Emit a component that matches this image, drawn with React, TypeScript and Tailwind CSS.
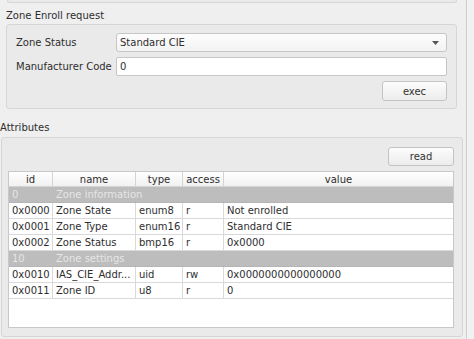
const rows: { kind: "section" | "row"; cells: string[] }[] = [
  { kind: "section", cells: ["0", "Zone information"] },
  { kind: "row", cells: ["0x0000", "Zone State", "enum8", "r", "Not enrolled"] },
  { kind: "row", cells: ["0x0001", "Zone Type", "enum16", "r", "Standard CIE"] },
  { kind: "row", cells: ["0x0002", "Zone Status", "bmp16", "r", "0x0000"] },
  { kind: "section", cells: ["10", "Zone settings"] },
  { kind: "row", cells: ["0x0010", "IAS_CIE_Addr...", "uid", "rw", "0x0000000000000000"] },
  { kind: "row", cells: ["0x0011", "Zone ID", "u8", "r", "0"] },
];

const cols = ["w-[44px]", "w-[83px]", "w-[47px]", "w-[41px]", "flex-1"];
const heads = ["id", "name", "type", "access", "value"];

function Button({ label, className }: { label: string; className: string }) {
  return (
    <div
      className={`h-[19px] flex items-center justify-center rounded-[3px] border border-[#c4c4c4] bg-gradient-to-b from-[#fcfcfc] to-[#ececec] text-[#333] ${className}`}
    >
      {label}
    </div>
  );
}

export default function App() {
  return (
    <div className="w-[474px] h-[339px] overflow-hidden flex bg-[#f2f2f2] font-['DejaVu_Sans',sans-serif] text-[10px] text-[#2e2e2e]">
      <div className="w-[467px] shrink-0 bg-[#efefef] border-r border-[#cfcfcf] flex flex-col">
        {/* previous group stub */}
        <div className="ml-[7px] w-[450px] h-[3px] border-x border-b border-[#d6d6d6] rounded-b-[3px] bg-[#eaeaea]" />

        <div className="h-[21px] pl-[6px] flex items-center pt-[3px]">Zone Enroll request</div>

        {/* Zone Enroll request */}
        <div className="ml-[6px] w-[451px] h-[85px] border border-[#d6d6d6] rounded-[3px] bg-[#eaeaea] pt-[8px] pl-[9px] pr-[9px] flex flex-col gap-[5px]">
          <div className="flex items-center h-[19px]">
            <div className="w-[100px]">Zone Status</div>
            <div className="flex-1 h-[19px] border border-[#c6c6c6] rounded-[3px] bg-gradient-to-b from-[#fdfdfd] to-[#f3f3f3] flex items-center pl-[3px] pr-[7px]">
              <span className="flex-1">Standard CIE</span>
              <svg width="7" height="4" viewBox="0 0 7 4">
                <path d="M0 0 L7 0 L3.5 4 Z" fill="#555" />
              </svg>
            </div>
          </div>
          <div className="flex items-center h-[19px]">
            <div className="w-[100px]">Manufacturer Code</div>
            <div className="flex-1 h-[19px] border border-[#c6c6c6] rounded-[2px] bg-white flex items-center pl-[3px]">0</div>
          </div>
          <div className="flex justify-end">
            <Button label="exec" className="w-[65px] h-[20px]" />
          </div>
        </div>

        <div className="h-[28px] flex items-end pb-[2px]">Attributes</div>

        {/* Attributes */}
        <div className="ml-[1px] w-[462px] h-[200px] border border-[#d6d6d6] rounded-[3px] bg-[#eaeaea] pt-[9px] pl-[6px] pr-[8px] flex flex-col">
          <div className="flex justify-end">
            <Button label="read" className="w-[66px] h-[19px]" />
          </div>
          <div className="mt-[5px] h-[157px] border border-[#c8c8c8] bg-white flex flex-col">
            <div className="flex h-[15px] bg-gradient-to-b from-[#ffffff] to-[#f1f1f1] border-b border-[#d4d4d4]">
              {heads.map((h, i) => (
                <div
                  key={h}
                  className={`${cols[i]} flex items-center justify-center ${i < 4 ? "border-r border-[#d4d4d4]" : ""}`}
                >
                  {h}
                </div>
              ))}
            </div>
            {rows.map((r, ri) =>
              r.kind === "section" ? (
                <div key={ri} className="flex h-[16px] bg-[#bdbdbd] text-[#e6e6e6] border-b border-[#b5b5b5]">
                  <div className="w-[44px] pl-[3px] flex items-center">{r.cells[0]}</div>
                  <div className="flex-1 pl-[3px] flex items-center">{r.cells[1]}</div>
                </div>
              ) : (
                <div key={ri} className="flex h-[16px] border-b border-[#d9d9d9]">
                  {r.cells.map((c, i) => (
                    <div
                      key={i}
                      className={`${cols[i]} pl-[3px] flex items-center whitespace-nowrap overflow-hidden ${i < 4 ? "border-r border-[#d9d9d9]" : ""}`}
                    >
                      {c}
                    </div>
                  ))}
                </div>
              )
            )}
          </div>
        </div>
      </div>
    </div>
  );
}
